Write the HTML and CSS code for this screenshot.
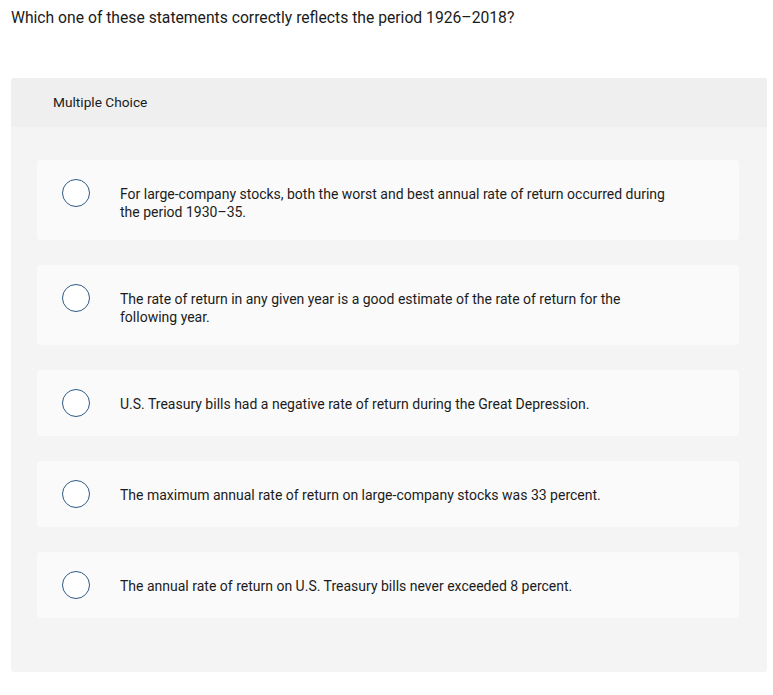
FILE: index.html
```html
<!DOCTYPE html>
<html>
<head>
<meta charset="utf-8">
<link rel="stylesheet" href="styles.css">
</head>
<body>
<div class="page">
  <p class="question">Which one of these statements correctly reflects the period 1926–2018?</p>
  <div class="panel">
    <div class="panel-head">Multiple Choice</div>
    <div class="panel-body">
      <div class="choice"><span class="radio"></span><div class="label">For large-company stocks, both the worst and best annual rate of return occurred during the period 1930–35.</div></div>
      <div class="choice"><span class="radio"></span><div class="label">The rate of return in any given year is a good estimate of the rate of return for the following year.</div></div>
      <div class="choice"><span class="radio"></span><div class="label">U.S. Treasury bills had a negative rate of return during the Great Depression.</div></div>
      <div class="choice"><span class="radio"></span><div class="label">The maximum annual rate of return on large-company stocks was 33 percent.</div></div>
      <div class="choice"><span class="radio"></span><div class="label">The annual rate of return on U.S. Treasury bills never exceeded 8 percent.</div></div>
    </div>
  </div>
</div>
</body>
</html>
```
FILE: styles.css
```css
html, body {
  margin: 0;
  padding: 0;
  background: #ffffff;
}
body {
  font-family: Roboto, "Open Sans", Arial, sans-serif;
  color: #1c1c1c;
}
.page {
  padding: 8px 6px 0 11px;
}
.question {
  margin: 0;
  font-size: 15.7px;
  line-height: 20px;
  color: #1a1a1a;
}
.panel {
  margin-top: 50px;
  background: #f4f4f4;
  border-radius: 3px;
  overflow: hidden;
}
.panel-head {
  background: #efefef;
  height: 49px;
  line-height: 49px;
  padding-left: 42px;
  font-size: 13.7px;
  color: #1a1a1a;
}
.panel-body {
  display: flex;
  flex-direction: column;
  gap: 25px;
  padding: 33px 28px 54px 26px;
}
.choice {
  display: flex;
  align-items: flex-start;
  background: #fafafa;
  border-radius: 4px;
  padding: 19px 20px 19px 25px;
}
.radio {
  flex: none;
  box-sizing: border-box;
  width: 28px;
  height: 28px;
  border: 1.5px solid #2d5a86;
  border-radius: 50%;
  background: #ffffff;
}
.label {
  margin: 6px 0 0 30px;
  font-size: 14px;
  line-height: 18px;
  max-width: 550px;
}
```
